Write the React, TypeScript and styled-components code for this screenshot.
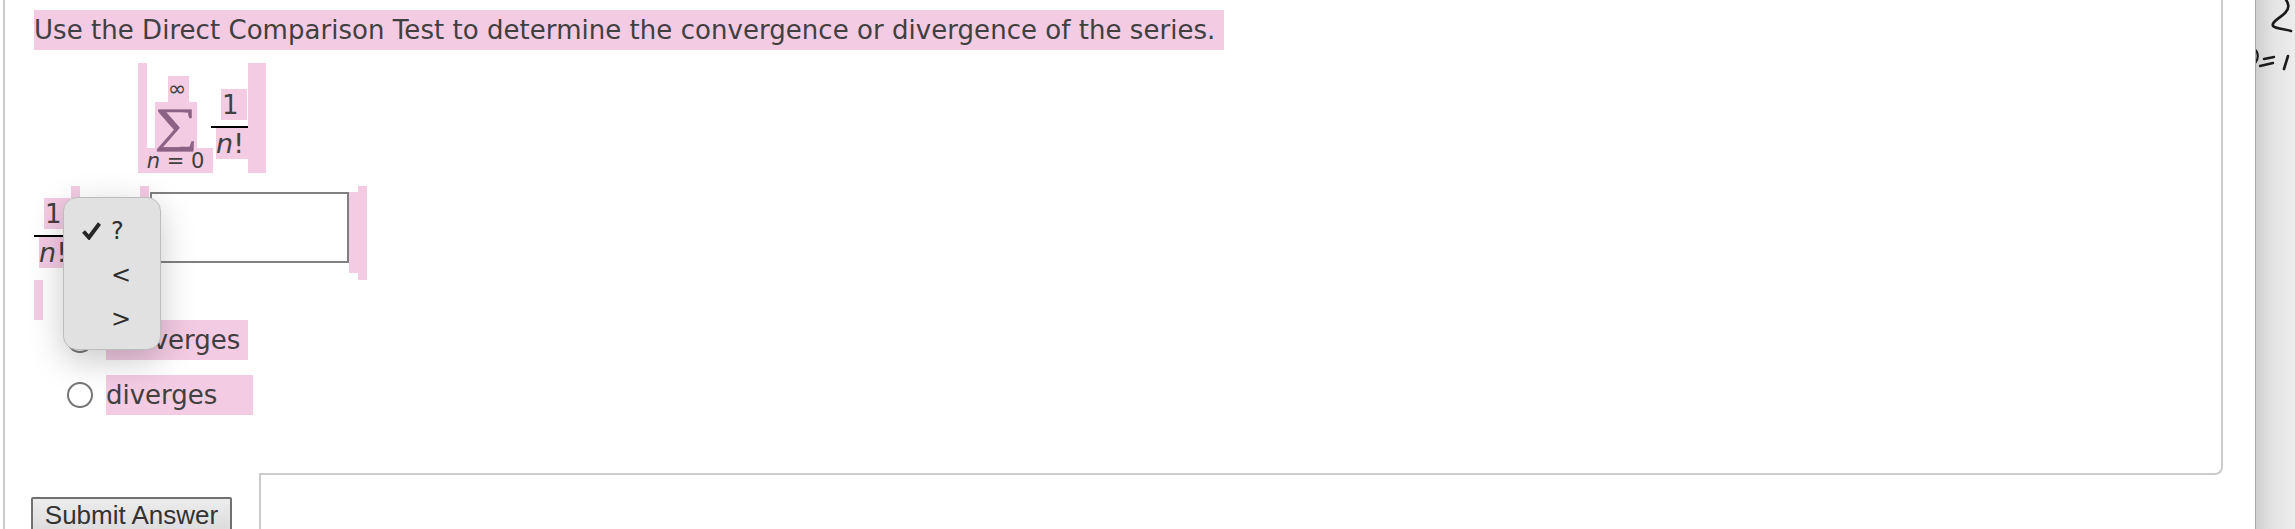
import React from 'react';
import styled, { createGlobalStyle } from 'styled-components';

const PINK = 'rgba(231, 151, 199, 0.5)';
const SOLID_PINK = '#f3cbe3';
const INK = '#404040';

const GlobalStyle = createGlobalStyle`
  html, body {
    margin: 0;
    height: 529px;
    overflow: hidden;
    background: #fff;
  }
  body {
    font-family: 'DejaVu Sans', Verdana, sans-serif;
    color: ${INK};
  }
`;

const Page = styled.div`
  display: flex;
  height: 529px;
  padding-left: 3px;
`;

const Panel = styled.main`
  flex: 1;
  margin-right: 32px;
  border-left: 2px solid #cbcbcb;
  overflow: hidden;
`;

const ProblemBox = styled.section`
  box-sizing: border-box;
  height: 475px;
  padding: 10px 0 0 29px;
  border-right: 2px solid #cbcbcb;
  border-bottom: 2px solid #cbcbcb;
  border-bottom-right-radius: 8px;
`;

const Prompt = styled.p`
  display: block;
  width: 1190px;
  height: 40px;
  margin: 0 0 13px;
  background: ${SOLID_PINK};
  font-size: 26px;
  line-height: 41px;
  letter-spacing: 0.04px;
  white-space: nowrap;
`;

const SumRow = styled.div`
  display: flex;
  height: 110px;
  margin-left: 104px;
`;

const LimitColumn = styled.div`
  display: flex;
  flex-direction: column;
  align-items: center;
  box-sizing: border-box;
  width: 75px;
  height: 110px;
  padding-top: 13px;
  background: linear-gradient(${SOLID_PINK}, ${SOLID_PINK}) left top / 9px 85px no-repeat;
`;

const Infinity_ = styled.span`
  box-sizing: border-box;
  width: 21px;
  height: 26px;
  margin-left: 6px;
  overflow: hidden;
  background: ${SOLID_PINK};
  font-size: 22px;
  line-height: 26px;
`;

const SigmaBox = styled.span`
  display: flex;
  align-items: center;
  justify-content: center;
  width: 42px;
  height: 46px;
  margin-left: 1px;
  background: ${SOLID_PINK};
`;

const SigmaGlyph = styled.span`
  display: block;
  font-family: 'Liberation Serif', serif;
  font-size: 48px;
  line-height: 46px;
  color: #8d6184;
  -webkit-text-stroke: 0.5px #8d6184;
  filter: blur(0.6px);
  transform: scaleX(1.27);
`;

const LowerLimit = styled.span`
  flex: none;
  width: 75px;
  height: 25px;
  background: ${SOLID_PINK};
  font-size: 21px;
  line-height: 27px;
  text-align: center;
  white-space: nowrap;
`;

const Variable = styled.i`
  font-style: italic;
`;

const Fraction = styled.div<{ $width: number; $top: number }>`
  display: flex;
  flex-direction: column;
  flex: none;
  width: ${(p) => p.$width}px;
  margin-left: ${(p) => (p.$top === 26 ? -2 : 0)}px;
  padding-top: ${(p) => p.$top}px;
`;

const Numerator = styled.span<{ $left: number }>`
  box-sizing: border-box;
  width: 26px;
  height: 31px;
  margin: 0 0 6px ${(p) => p.$left}px;
  padding-left: 1px;
  background: ${PINK};
  font-size: 26px;
  line-height: 33px;
`;

const FractionLine = styled.span`
  display: block;
  height: 2px;
  background: #000;
`;

const Denominator = styled.span<{ $left: number }>`
  box-sizing: border-box;
  width: 36px;
  height: 31px;
  margin: 0 0 0 ${(p) => p.$left}px;
  background: ${PINK};
  font-size: 27px;
  line-height: 32px;
  white-space: nowrap;
`;

const Bar = styled.span<{ $width: number; $height: number; $top?: number }>`
  display: block;
  flex: none;
  width: ${(p) => p.$width}px;
  height: ${(p) => p.$height}px;
  margin-top: ${(p) => p.$top ?? 0}px;
  background: ${SOLID_PINK};
`;

const AnswerRow = styled.div`
  position: relative;
  display: flex;
  align-items: flex-start;
  height: 94px;
  margin-top: 13px;
`;

const SelectSlot = styled.span`
  flex: none;
  width: 60px;
`;

const AnswerInput = styled.input`
  flex: none;
  box-sizing: border-box;
  width: 199px;
  height: 71px;
  margin: 6px 0 0 1px;
  padding: 0;
  border: 2px solid #808080;
  background: #fff;
`;

const Menu = styled.ul`
  position: absolute;
  left: 29px;
  top: 11px;
  box-sizing: border-box;
  width: 98px;
  height: 153px;
  margin: 0;
  padding: 11px 0 0;
  list-style: none;
  border: 1px solid #bdbdbd;
  border-radius: 14px;
  background: #e1e1e1;
  box-shadow: 0 10px 34px rgba(0, 0, 0, 0.22);
`;

const MenuItem = styled.li`
  display: flex;
  align-items: center;
  height: 44px;
  font-size: 24px;
  color: #2e2e2e;
`;

const CheckSlot = styled.span`
  display: flex;
  justify-content: flex-end;
  width: 37px;
  margin-right: 10px;
`;

const RadioRow = styled.label`
  display: flex;
  align-items: center;
  height: 40px;
  margin: 0 0 15px 33px;
`;

const Radio = styled.input`
  appearance: none;
  flex: none;
  box-sizing: border-box;
  width: 26px;
  height: 26px;
  margin: 0 13px 0 0;
  border: 2px solid #767676;
  border-radius: 50%;
  background: #fff;
`;

const RadioText = styled.span<{ $width: number }>`
  width: ${(p) => p.$width}px;
  height: 40px;
  background: ${SOLID_PINK};
  font-size: 26px;
  line-height: 40px;
  white-space: nowrap;
`;

const Footer = styled.footer`
  display: flex;
  height: 56px;
  margin-top: -2px;
`;

const SubmitCell = styled.div`
  flex: none;
  box-sizing: border-box;
  width: 254px;
  padding: 24px 0 0 26px;
  background: #fff;
`;

const SubmitButton = styled.button`
  display: block;
  box-sizing: border-box;
  width: 201px;
  height: 44px;
  padding: 0 0 8px;
  border: 2px solid #707070;
  border-radius: 2px;
  background: linear-gradient(#ececec, #d8d8d8);
  color: #333;
  font-family: 'Liberation Sans', Arial, sans-serif;
  font-size: 26px;
  line-height: 32px;
`;

const NoteBox = styled.div`
  flex: 1;
  border-left: 2px solid #cbcbcb;
`;

const Strip = styled.aside`
  flex: none;
  box-sizing: border-box;
  width: 40px;
  height: 529px;
  border-left: 1px solid #a9a9a9;
  background: linear-gradient(90deg, #cfcfcf, #e4e4e4 45%, #ededed);
`;

const Scribble = () => (
  <svg width="39" height="80" viewBox="0 0 39 80" fill="none" stroke="#1b1b1b" strokeLinecap="round">
    <path d="M29 -2C33 4 34 8 29 13C24 18 15 22 17 26C20 29 29 29 35 31" strokeWidth="2.6" />
    <path d="M-2 49C3 52 3 60 -2 64" strokeWidth="2.2" />
    <path d="M8 59L18 57M4 66L17 63" strokeWidth="2.4" />
    <path d="M32 56L28 69" strokeWidth="2.6" />
  </svg>
);

const Check = () => (
  <svg width="19" height="18" viewBox="0 0 19 18" fill="none" stroke="#262626" strokeWidth="4">
    <path d="M1.5 9.5L7 15.5L17.5 1.5" />
  </svg>
);

const OneOverFactorial = ({ width, top, numLeft, denLeft }: { width: number; top: number; numLeft: number; denLeft: number }) => (
  <Fraction $width={width} $top={top}>
    <Numerator $left={numLeft}>1</Numerator>
    <FractionLine />
    <Denominator $left={denLeft}>
      <Variable>n</Variable>!
    </Denominator>
  </Fraction>
);

const App = () => {
  return (
    <Page>
      <GlobalStyle />
      <Panel>
        <ProblemBox>
          <Prompt>Use the Direct Comparison Test to determine the convergence or divergence of the series.</Prompt>
          <SumRow>
            <LimitColumn>
              <Infinity_>∞</Infinity_>
              <SigmaBox>
                <SigmaGlyph>∑</SigmaGlyph>
              </SigmaBox>
              <LowerLimit>
                <Variable>n</Variable> = 0
              </LowerLimit>
            </LimitColumn>
            <OneOverFactorial width={37} top={26} numLeft={10} denLeft={5} />
            <Bar $width={18} $height={110} />
          </SumRow>
          <AnswerRow>
            <OneOverFactorial width={37} top={12} numLeft={10} denLeft={5} />
            <Bar $width={9} $height={30} />
            <SelectSlot />
            <Bar $width={9} $height={30} />
            <AnswerInput type="text" aria-label="answer" />
            <Bar $width={9} $height={81} $top={6} />
            <Bar $width={9} $height={94} />
            <Menu>
              <MenuItem>
                <CheckSlot>
                  <Check />
                </CheckSlot>
                ?
              </MenuItem>
              <MenuItem>
                <CheckSlot />
                &lt;
              </MenuItem>
              <MenuItem>
                <CheckSlot />
                &gt;
              </MenuItem>
            </Menu>
          </AnswerRow>
          <Bar $width={9} $height={40} />
          <RadioRow>
            <Radio type="radio" name="result" />
            <RadioText $width={142}>converges</RadioText>
          </RadioRow>
          <RadioRow>
            <Radio type="radio" name="result" />
            <RadioText $width={147}>diverges</RadioText>
          </RadioRow>
        </ProblemBox>
        <Footer>
          <SubmitCell>
            <SubmitButton type="button">Submit Answer</SubmitButton>
          </SubmitCell>
          <NoteBox />
        </Footer>
      </Panel>
      <Strip>
        <Scribble />
      </Strip>
    </Page>
  );
};

export default App;
